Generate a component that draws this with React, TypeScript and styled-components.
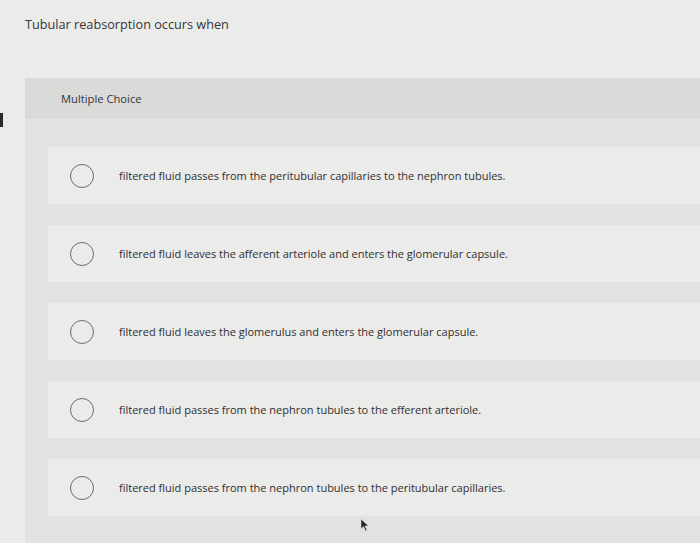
import React from "react";
import styled, { createGlobalStyle } from "styled-components";

const Global = createGlobalStyle`
  html, body { margin: 0; padding: 0; background: #ebebea; }
  body { font-family: "Open Sans", "Liberation Sans", sans-serif; }
`;

const Page = styled.div`
  position: relative;
  width: 700px;
  height: 543px;
  overflow: hidden;
  background: #ebebea;
  padding: 15px 0 0 25px;
  box-sizing: border-box;
  &::before {
    content: "";
    position: absolute;
    left: 0;
    top: 113px;
    width: 3px;
    height: 14px;
    background: #2a2a2a;
  }
`;

const Title = styled.div`
  font-size: 12.7px;
  line-height: 18px;
  color: #353535;
  height: 63px;
`;

const Panel = styled.section`
  background: #e2e2e1;
  height: 480px;
`;

const Header = styled.div`
  background: #dadad9;
  height: 41px;
  display: flex;
  align-items: center;
  padding-left: 36px;
  font-size: 11.2px;
  color: #353535;
`;

const Options = styled.div`
  display: flex;
  flex-direction: column;
  gap: 21px;
  padding: 28px 0 0 23px;
`;

const Option = styled.label`
  display: flex;
  align-items: center;
  height: 57px;
  background: #ebebea;
  padding-left: 22px;
  font-size: 11px;
  color: #2f2f2f;
`;

const Radio = styled.span`
  width: 22px;
  height: 22px;
  border: 1.3px solid #6a6a6a;
  border-radius: 50%;
  flex: none;
`;

const Text = styled.span`
  margin-left: 25px;
  margin-top: -1px;
`;

const Cursor = styled.svg`
  position: absolute;
  left: 360px;
  top: 518px;
`;

const options = [
  "filtered fluid passes from the peritubular capillaries to the nephron tubules.",
  "filtered fluid leaves the afferent arteriole and enters the glomerular capsule.",
  "filtered fluid leaves the glomerulus and enters the glomerular capsule.",
  "filtered fluid passes from the nephron tubules to the efferent arteriole.",
  "filtered fluid passes from the nephron tubules to the peritubular capillaries.",
];

export default function App() {
  return (
    <Page>
      <Global />
      <Title>Tubular reabsorption occurs when</Title>
      <Panel>
        <Header>Multiple Choice</Header>
        <Options>
          {options.map((o) => (
            <Option key={o}>
              <Radio />
              <Text>{o}</Text>
            </Option>
          ))}
        </Options>
      </Panel>
      <Cursor width="10" height="14" viewBox="0 0 10 14">
        <path d="M1 1 L1 11 L3.5 8.5 L5.5 13 L7 12.3 L5 8 L8.5 8 Z" fill="#222" stroke="#ddd" strokeWidth="0.6" />
      </Cursor>
    </Page>
  );
}
